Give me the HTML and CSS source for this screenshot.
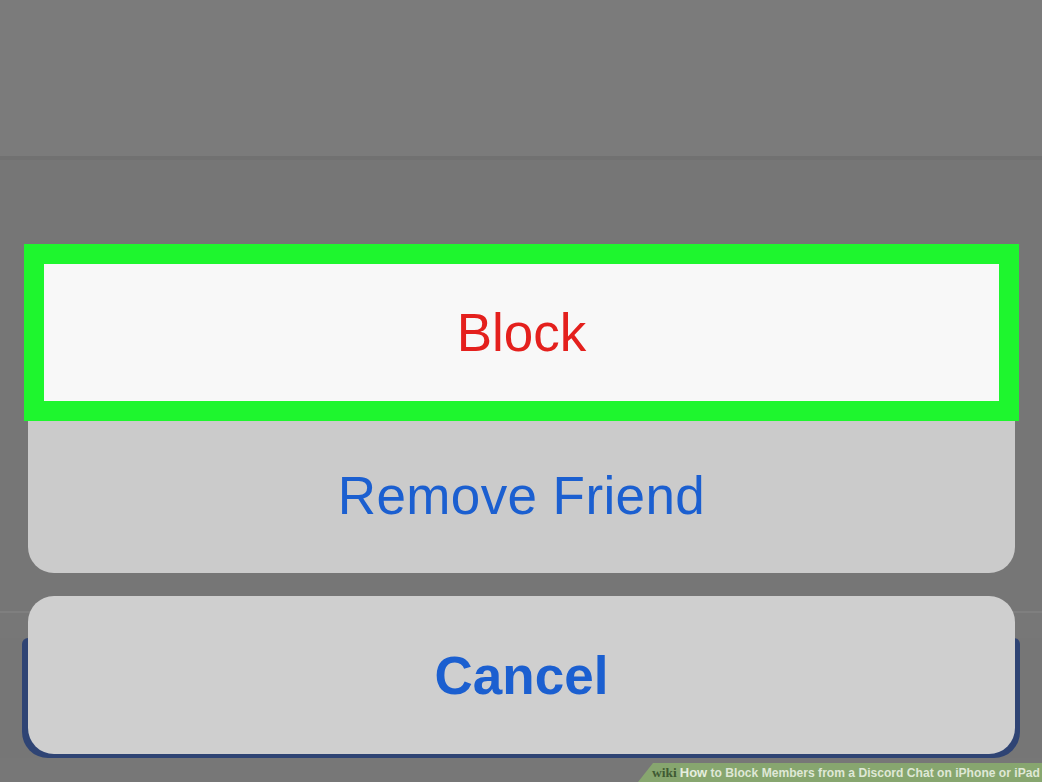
FILE: index.html
```html
<!DOCTYPE html>
<html lang="en">
<head>
<meta charset="utf-8">
<title>Block member</title>
<link rel="stylesheet" href="styles.css">
</head>
<body>
<div class="page">
  <div class="backdrop">
    <div class="header-band"></div>
    <div class="header-line"></div>
    <div class="middle"></div>
    <div class="mid-line"></div>
    <div class="pre-button"></div>
    <div class="under-button"></div>
    <div class="bottom-strip">
      <div class="wh-banner"><span class="wh-wiki">wiki</span><span class="wh-how">How</span> to Block Members from a Discord Chat on iPhone or iPad</div>
    </div>
  </div>
  <div class="sheet">
    <div class="group">
      <div class="row row-block"><span class="label label-red">Block</span></div>
      <div class="row row-remove"><span class="label label-blue">Remove Friend</span></div>
    </div>
    <div class="cancel"><span class="label label-blue label-bold">Cancel</span></div>
  </div>
</div>
</body>
</html>
```

FILE: styles.css
```css
html, body {
  margin: 0;
  padding: 0;
  width: 1042px;
  height: 782px;
  overflow: hidden;
  background: #767676;
}
.page {
  position: relative;
  width: 1042px;
  height: 782px;
  font-family: "Liberation Sans", Arial, sans-serif;
}
.backdrop {
  display: flex;
  flex-direction: column;
  height: 782px;
}
.header-band {
  height: 156px;
  background: #7b7b7b;
}
.header-line {
  height: 4px;
  background: #717171;
}
.middle {
  height: 451px;
  background: #767676;
}
.mid-line {
  height: 2px;
  background: #7f7f7f;
}
.pre-button {
  height: 25px;
  background: #777777;
}
.under-button {
  height: 120px;
  margin: 0 22px;
  background: #2f4474;
  border-radius: 6px 6px 26px 26px;
}
.bottom-strip {
  flex: 1;
  display: flex;
  justify-content: flex-end;
  align-items: flex-end;
  background: #777777;
}
.wh-banner {
  height: 19px;
  width: 404px;
  box-sizing: border-box;
  padding: 0 0 0 14px;
  background: #87a66f;
  clip-path: polygon(15px 0, 100% 0, 100% 100%, 0 100%);
  color: #dfe8d6;
  font-weight: bold;
  font-size: 12.1px;
  line-height: 19px;
  white-space: nowrap;
}
.wh-wiki {
  font-family: "Liberation Serif", "Times New Roman", serif;
  color: #3f5a33;
  font-size: 13.5px;
  margin-right: 3px;
}
.wh-how {
  color: #e6eedf;
  font-size: 13px;
}
.sheet {
  position: absolute;
  top: 244px;
  left: 28px;
  width: 987px;
  display: flex;
  flex-direction: column;
  gap: 23px;
}
.group {
  background: #cbcbcb;
  border-radius: 26px;
  display: flex;
  flex-direction: column;
}
.row {
  display: flex;
  align-items: center;
  justify-content: center;
}
.row-block {
  margin: 0 -4px;
  height: 137px;
  border: 20px solid #1ef62e;
  background: #f8f8f8;
}
.row-remove {
  height: 152px;
  padding-bottom: 4px;
  box-sizing: border-box;
}
.cancel {
  height: 158px;
  background: #cfcfcf;
  border-radius: 26px;
  display: flex;
  align-items: center;
  justify-content: center;
}
.label {
  font-size: 53px;
  line-height: 1;
}
.label-red {
  color: #e4201d;
}
.label-blue {
  color: #1b5fd0;
  letter-spacing: 0.4px;
}
.label-bold {
  font-weight: bold;
  letter-spacing: 0;
}
```
